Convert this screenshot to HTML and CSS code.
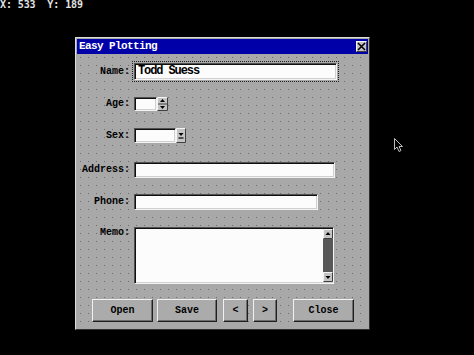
FILE: index.html
```html
<!DOCTYPE html>
<html>
<head>
<meta charset="utf-8">
<title>Easy Plotting</title>
<link rel="stylesheet" href="styles.css">
</head>
<body>
<div class="screen">
  <div class="coords">X: 533  Y: 189</div>
  <div class="window">
    <div class="titlebar">
      <span class="title">Easy Plotting</span>
      <span class="close-box"><svg width="9" height="9" viewBox="0 0 9 9"><path d="M1 1L8 8M8 1L1 8" stroke="#000" stroke-width="1.6"/></svg></span>
    </div>
    <div class="content">
      <div class="row row-name">
        <span class="lbl">Name:</span>
        <div class="field f-name"><span class="value">Todd Suess</span></div>
      </div>
      <div class="row row-age">
        <span class="lbl">Age:</span>
        <div class="combo">
          <div class="field f-age"></div>
          <svg class="spin" width="11" height="14" viewBox="0 0 11 14">
            <rect x="0" y="0" width="11" height="14" fill="#c4c4c4"/>
            <path d="M0.5 13.5V0.5H10.5" stroke="#f4f4f4" fill="none"/>
            <path d="M10.5 0.5V13.5H0.5" stroke="#404040" fill="none"/>
            <path d="M1 7H10" stroke="#404040"/>
            <path d="M5.5 2L8 5H3Z" fill="#000"/>
            <path d="M3 9H8L5.5 12Z" fill="#000"/>
          </svg>
        </div>
      </div>
      <div class="row row-sex">
        <span class="lbl">Sex:</span>
        <div class="combo">
          <div class="field f-sex"></div>
          <svg class="drop" width="10" height="15" viewBox="0 0 10 15">
            <rect x="0" y="0" width="10" height="15" fill="#c4c4c4"/>
            <path d="M0.5 14.5V0.5H9.5" stroke="#f4f4f4" fill="none"/>
            <path d="M9.5 0.5V14.5H0.5" stroke="#404040" fill="none"/>
            <path d="M2.5 5H7.5L5 8Z" fill="#000"/>
            <path d="M2.5 10H7.5" stroke="#000" stroke-width="1.2"/>
          </svg>
        </div>
      </div>
      <div class="row row-address">
        <span class="lbl">Address:</span>
        <div class="field f-address"></div>
      </div>
      <div class="row row-phone">
        <span class="lbl">Phone:</span>
        <div class="field f-phone"></div>
      </div>
      <div class="row row-memo">
        <span class="lbl">Memo:</span>
        <div class="field f-memo">
          <div class="scrollbar">
            <svg width="10" height="10" viewBox="0 0 10 10">
              <rect width="10" height="10" fill="#c4c4c4"/>
              <path d="M0.5 9.5V0.5H9.5" stroke="#f4f4f4" fill="none"/>
              <path d="M9.5 0.5V9.5H0.5" stroke="#404040" fill="none"/>
              <path d="M5 3L7.5 6H2.5Z" fill="#000"/>
            </svg>
            <div class="track"></div>
            <svg width="10" height="10" viewBox="0 0 10 10">
              <rect width="10" height="10" fill="#c4c4c4"/>
              <path d="M0.5 9.5V0.5H9.5" stroke="#f4f4f4" fill="none"/>
              <path d="M9.5 0.5V9.5H0.5" stroke="#404040" fill="none"/>
              <path d="M2.5 4H7.5L5 7Z" fill="#000"/>
            </svg>
          </div>
        </div>
      </div>
      <div class="buttons">
        <div class="btn b-open">Open</div>
        <div class="btn b-save">Save</div>
        <div class="btn b-prev">&lt;</div>
        <div class="btn b-next">&gt;</div>
        <div class="btn b-close">Close</div>
      </div>
    </div>
  </div>
  <svg class="cursor" width="11" height="15" viewBox="0 0 11 15">
    <path d="M0.5 0.5V11.5L3 9L5 13.5L7 12.5L5 8.5H8.5Z" fill="#000" stroke="#bdbdbd" stroke-width="1"/>
  </svg>
</div>
</body>
</html>
```
FILE: styles.css
```css
html, body {
  margin: 0;
  padding: 0;
  background: #000;
}

.screen {
  position: relative;
  width: 474px;
  height: 355px;
  overflow: hidden;
  background: #000;
}

.coords {
  color: #e4e4e4;
  font: bold 10px/10px "DejaVu Sans Mono", monospace;
  letter-spacing: -0.1px;
  white-space: pre;
}

.window {
  position: absolute;
  left: 75px;
  top: 37px;
  width: 295px;
  height: 293px;
  box-sizing: border-box;
  border: 1px solid;
  border-color: #dcdcdc #303030 #303030 #dcdcdc;
  padding: 1px;
  background: #a8a8a8;
  display: flex;
  flex-direction: column;
}

.titlebar {
  height: 15px;
  flex: none;
  background: #0000a8;
  display: flex;
  align-items: center;
  justify-content: space-between;
  padding: 0 1px 0 2px;
}

.title {
  color: #fff;
  font: bold 11px/13px "Liberation Mono", monospace;
  letter-spacing: -0.6px;
}

.close-box {
  width: 11px;
  height: 11px;
  box-sizing: border-box;
  background: #c4c4c4;
  border: 1px solid;
  border-color: #f4f4f4 #404040 #404040 #f4f4f4;
  display: flex;
  align-items: center;
  justify-content: center;
}

.close-box svg {
  display: block;
}

.content {
  flex: 1;
  background-color: #6c6c6c;
  background-image:
    linear-gradient(to right, transparent 1px, #a8a8a8 1px),
    linear-gradient(to bottom, transparent 1px, #a8a8a8 1px);
  background-size: 8px 8px;
  background-position: 3px 3px;
  padding-top: 9px;
  display: flex;
  flex-direction: column;
}

.row {
  display: grid;
  grid-template-columns: 53px auto;
  column-gap: 4px;
  align-items: center;
  justify-content: start;
}

.lbl {
  text-align: right;
  font: bold 10px/10px "Liberation Mono", monospace;
  color: #000;
}

.field {
  box-sizing: border-box;
  background: #fcfcfc;
  border: 1px solid;
  border-color: #505050 #f4f4f4 #f4f4f4 #505050;
  box-shadow: inset 1px 1px 0 #101010, inset -1px -1px 0 #d0d0d0;
}

.combo {
  display: flex;
}

.combo svg {
  display: block;
}

.row-age { margin-top: 17px; }
.row-sex { margin-top: 17px; }
.row-address { margin-top: 19px; }
.row-phone { margin-top: 16px; }
.row-memo { margin-top: 17px; align-items: start; }
.row-memo .lbl { padding-top: 1px; }

.f-name {
  width: 203px;
  height: 17px;
  outline: 1px dotted #202020;
  outline-offset: 1px;
  display: flex;
  align-items: center;
}

.value {
  padding-left: 3px;
  font: bold 12px/15px "Liberation Mono", monospace;
  letter-spacing: -1.1px;
  color: #000;
}

.f-age {
  width: 23px;
  height: 14px;
}

.f-sex {
  width: 42px;
  height: 15px;
}

.f-address {
  width: 201px;
  height: 16px;
}

.f-phone {
  width: 184px;
  height: 16px;
}

.f-memo {
  width: 200px;
  height: 57px;
  display: flex;
  justify-content: flex-end;
  padding: 1px 0 1px 0;
}

.scrollbar {
  width: 10px;
  display: flex;
  flex-direction: column;
}

.scrollbar svg {
  display: block;
  flex: none;
}

.track {
  flex: 1;
  background: #585858;
}

.buttons {
  display: flex;
  margin-top: 15px;
  padding-left: 15px;
}

.btn {
  height: 23px;
  box-sizing: border-box;
  background: #ababab;
  border: 1px solid;
  border-color: #f0f0f0 #202020 #202020 #f0f0f0;
  box-shadow: inset -1px -1px 0 #6c6c6c;
  font: bold 10px/10px "Liberation Mono", monospace;
  color: #000;
  display: flex;
  align-items: center;
  justify-content: center;
}

.b-open { width: 61px; }
.b-save { width: 60px; margin-left: 4px; }
.b-prev { width: 25px; margin-left: 6px; }
.b-next { width: 24px; margin-left: 5px; }
.b-close { width: 61px; margin-left: 16px; }

.cursor {
  position: absolute;
  left: 394px;
  top: 138px;
}
```
